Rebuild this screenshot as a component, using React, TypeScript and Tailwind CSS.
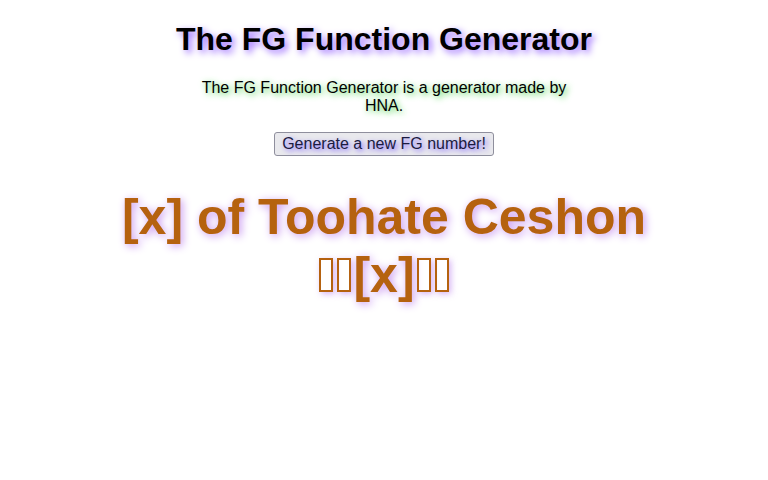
function Tofu() {
  return (
    <span
      aria-hidden="true"
      className="mx-[2px] inline-block h-[34px] w-[14px] border-2 border-[#b5620f] shadow-[2px_2px_6px_rgba(200,150,240,0.7)]"
    />
  );
}

export default function App() {
  return (
    <div className="min-h-[480px] bg-white text-center font-['Liberation_Sans',Arial,sans-serif]">
      <h1 className="pt-[21px] text-[32px] font-bold leading-[37px] text-black [text-shadow:3px_3px_7px_rgb(150,100,255)]">
        The FG Function Generator
      </h1>
      <p className="mx-auto mt-[21px] w-[372px] text-base leading-[18px] text-black [text-shadow:2px_2px_6px_rgb(70,210,70)]">
        The FG Function Generator is a generator made by HNA.
      </p>
      <div className="mt-[17px] flex justify-center">
        <button className="h-6 rounded-[3px] border border-[#8f8f9d] bg-[#e9e9ed] px-[7px] text-base leading-[22px] text-[#1b1b40] [text-shadow:2px_2px_5px_rgb(120,90,255)]">
          Generate a new FG number!
        </button>
      </div>
      <div className="mt-[32px] text-[50px] font-bold leading-[58px] text-[#b5620f] [text-shadow:2px_2px_8px_rgb(200,150,240)]">
        <div>[x] of Toohate Ceshon</div>
        <div>
          <Tofu />
          <Tofu />
          [x]
          <Tofu />
          <Tofu />
        </div>
      </div>
    </div>
  );
}
